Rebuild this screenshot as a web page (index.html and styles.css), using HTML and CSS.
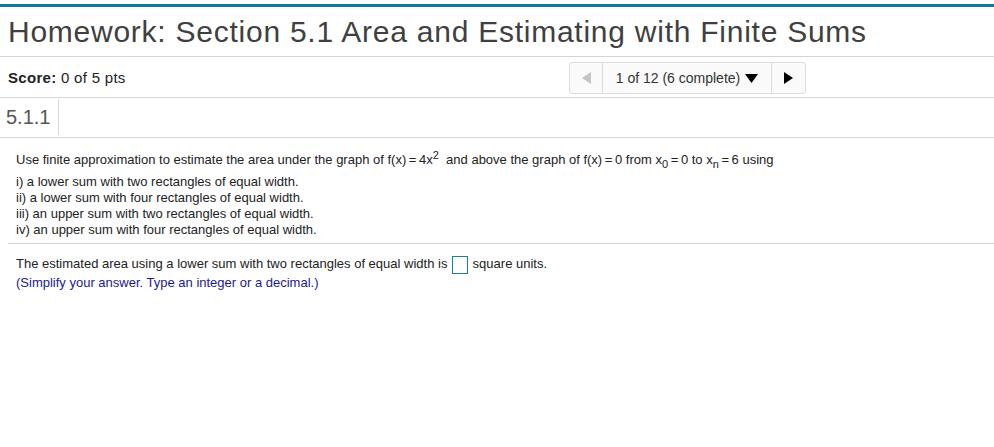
FILE: index.html
```html
<!DOCTYPE html>
<html lang="en">
<head>
    <meta charset="UTF-8">
    <title>Homework: Section 5.1</title>
    <link rel="stylesheet" href="styles.css">
</head>
<body>

<div class="topbar"></div>

<h1 class="title">Homework: Section 5.1 Area and Estimating with Finite Sums</h1>

<div class="score-row">
    <div class="score"><b>Score:</b> 0 of 5 pts</div>
    <div class="nav">
        <button class="nav-btn prev" disabled>
            <svg width="9" height="12" viewBox="0 0 9 12"><path d="M9 0 L0 6 L9 12 Z" fill="#c4c4c4"/></svg>
        </button>
        <button class="nav-btn middle">1 of 12 (6 complete)
            <svg width="13" height="9" viewBox="0 0 13 9"><path d="M0 0 L13 0 L6.5 9 Z" fill="#000"/></svg>
        </button>
        <button class="nav-btn next">
            <svg width="9" height="12" viewBox="0 0 9 12"><path d="M0 0 L9 6 L0 12 Z" fill="#000"/></svg>
        </button>
    </div>
</div>

<div class="question-id">
    <span class="qnum">5.1.1</span>
</div>

<div class="question">
    <p class="intro">Use finite approximation to estimate the area under the graph of f(x)&thinsp;=&thinsp;4x<sup>2</sup> &nbsp;and above the graph of f(x)&thinsp;=&thinsp;0 from x<sub>0</sub>&thinsp;=&thinsp;0 to x<sub>n</sub>&thinsp;=&thinsp;6 using</p>
    <ul class="parts">
        <li>i) a lower sum with two rectangles of equal width.</li>
        <li>ii) a lower sum with four rectangles of equal width.</li>
        <li>iii) an upper sum with two rectangles of equal width.</li>
        <li>iv) an upper sum with four rectangles of equal width.</li>
    </ul>
</div>

<div class="answer">
    <p>The estimated area using a lower sum with two rectangles of equal width is <input type="text" class="answer-box"> square units.</p>
    <p class="hint">(Simplify your answer. Type an integer or a decimal.)</p>
</div>

</body>
</html>
```

FILE: styles.css
```css
body {
    font-family: 'Liberation Sans', Arial, sans-serif;
    margin: 0;
    padding-top: 4px;
    background-color: #fff;
    color: #222;
}

.topbar {
    height: 3px;
    background-color: #0e7a9a;
}

.title {
    font-size: 30px;
    letter-spacing: 0.75px;
    line-height: 34px;
    font-weight: normal;
    color: #404040;
    margin: 0;
    padding: 8px 8px 0 8px;
    height: 41px;
    border-bottom: 1px solid #d3d3dd;
}

.score-row {
    display: flex;
    align-items: center;
    height: 40px;
    border-bottom: 1px solid #d3d3dd;
}

.score {
    font-size: 15px;
    letter-spacing: 0.3px;
    color: #222;
    padding-left: 8px;
    width: 561px;
}

.nav {
    display: flex;
    height: 30px;
    border: 1px solid #dcdcdc;
    border-radius: 3px;
    background-color: #fafafa;
    margin-top: 2px;
}

.nav-btn {
    font-family: 'Liberation Sans', Arial, sans-serif;
    background: none;
    border: none;
    padding: 0;
    display: flex;
    align-items: center;
    justify-content: center;
    font-size: 14px;
    color: #333;
}

.nav-btn.prev {
    width: 33px;
    border-right: 1px solid #dcdcdc;
}

.nav-btn.middle {
    width: 169px;
    gap: 5px;
    border-right: 1px solid #dcdcdc;
}

.nav-btn.next {
    width: 33px;
}

.question-id {
    height: 39px;
    border-bottom: 1px solid #d3d3dd;
}

.qnum {
    display: inline-block;
    font-size: 20px;
    line-height: 36px;
    color: #555;
    padding: 0 8px 0 6px;
    border-right: 1px solid #d8d8d8;
    margin-top: 1px;
}

.question {
    font-size: 13px;
    border-bottom: 1px solid #d3d3dd;
    margin-left: 8px;
    padding: 13px 8px 5px 8px;
}

.intro {
    margin: 0 0 5px 0;
    line-height: 18px;
}

sup, sub {
    font-size: 11px;
    line-height: 0;
}

.parts {
    list-style: none;
    margin: 0;
    padding: 0;
    line-height: 16px;
}

.answer {
    padding: 11px 16px;
    font-size: 13px;
}

.answer p {
    margin: 0;
    line-height: 17px;
}

.answer-box {
    width: 14px;
    height: 16px;
    border: 1px solid #1a7f9c;
    padding: 0;
    vertical-align: middle;
    margin: 0 1px;
}

.hint {
    color: #1a1a90;
}
```
